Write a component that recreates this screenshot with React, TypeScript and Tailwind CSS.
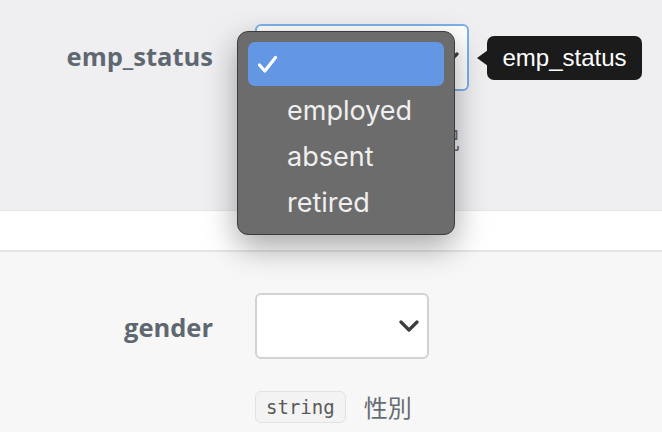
import React from "react";

const labelCls =
  "w-[213px] shrink-0 text-right font-['Open_Sans',sans-serif] font-bold text-[25.5px] text-[#5f6870] leading-none";

function Chevron() {
  return (
    <svg width="20" height="12" viewBox="0 0 20 12" fill="none">
      <path d="M2 2 L10 10 L18 2" stroke="#3d3d3d" strokeWidth="3.2" strokeLinecap="round" strokeLinejoin="round" />
    </svg>
  );
}

function Desc({ text }: { text: string }) {
  return (
    <div className="mt-[32px] flex items-center gap-[18px]">
      <span className="h-[32px] px-[10px] flex items-center rounded-[6px] border border-[#e2e2e2] bg-[#f3f3f3] font-['DejaVu_Sans_Mono',monospace] text-[19px] text-[#5a5a5a]">
        string
      </span>
      <span className="font-['Noto_Sans_CJK_JP',sans-serif] text-[24px] text-[#666c72] leading-none">{text}</span>
    </div>
  );
}

export default function App() {
  const items = ["employed", "absent", "retired"];
  return (
    <div className="w-[662px] h-[432px] overflow-hidden bg-[#f7f7f7] flex flex-col">
      {/* Top section */}
      <div className="h-[211px] shrink-0 bg-[#efeff2] border-b border-[#e6e6e8] pt-[24px] flex">
        <div className={labelCls + " pt-[20px]"}>emp_status</div>
        <div className="ml-[42px] flex flex-col">
          <div className="relative w-[214px] h-[67px]">
            <div className="w-full h-full rounded-[6px] border-2 border-[#7eb0ea] bg-white flex items-center justify-end pr-[8px]">
              <Chevron />
            </div>
            {/* dropdown menu */}
            <div className="absolute left-[-18px] top-[7px] w-[218px] h-[204px] rounded-[11px] border border-[#3c3c3c] bg-[#6b6c6b] shadow-[0_12px_32px_rgba(0,0,0,0.35)] pt-[10px] px-[10px] flex flex-col gap-[2px] z-10">
              <div className="h-[44px] shrink-0 rounded-[7px] bg-[#6497e3] flex items-center pl-[9px]">
                <svg width="21" height="19" viewBox="0 0 21 19" fill="none">
                  <path d="M2.5 10 L7.8 16 L18.5 2.5" stroke="white" strokeWidth="3.2" strokeLinecap="round" strokeLinejoin="round" />
                </svg>
              </div>
              {items.map((t) => (
                <div
                  key={t}
                  className="h-[44px] shrink-0 flex items-center pl-[39px] font-['Inter',sans-serif] text-[27px] text-[#efefef] leading-none"
                >
                  {t}
                </div>
              ))}
            </div>
            {/* tooltip */}
            <div className="absolute left-[232px] top-[12px] h-[44px] w-[155px] rounded-[7px] bg-[#1b1b1b] flex items-center justify-center font-['Liberation_Sans',sans-serif] text-[24px] text-white z-10">
              <span className="absolute left-[-10px] top-[14px] w-0 h-0 border-y-[8px] border-y-transparent border-r-[11px] border-r-[#1b1b1b]" />
              emp_status
            </div>
          </div>
          <Desc text="在职状况" />
        </div>
      </div>
      {/* White strip */}
      <div className="h-[41px] shrink-0 bg-white border-b-2 border-[#e4e4e4]" />
      {/* Bottom section */}
      <div className="flex-1 bg-[#f7f7f7] pt-[41px] flex">
        <div className={labelCls + " pt-[22px]"}>gender</div>
        <div className="ml-[42px] flex flex-col">
          <div className="w-[174px] h-[66px] rounded-[6px] border-2 border-[#d2d2d2] bg-white flex items-center justify-end pr-[8px]">
            <Chevron />
          </div>
          <Desc text="性別" />
        </div>
      </div>
    </div>
  );
}
